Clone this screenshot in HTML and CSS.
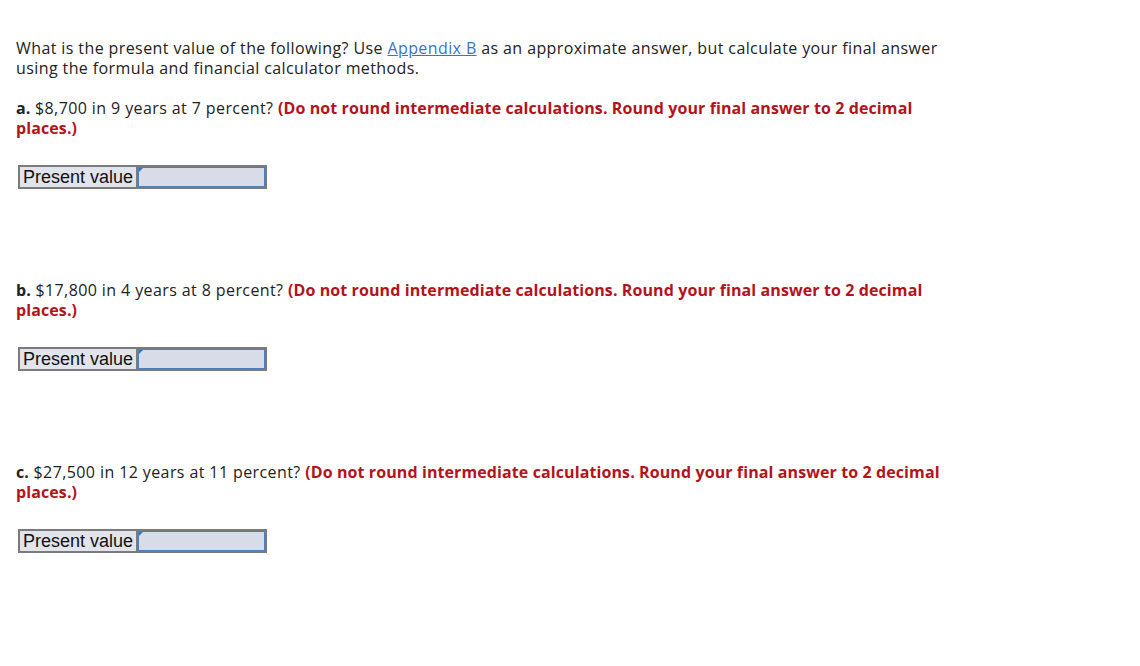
FILE: index.html
```html
<!DOCTYPE html>
<html>
<head>
<meta charset="utf-8">
<link rel="stylesheet" href="styles.css">
</head>
<body>
<div class="page">
  <p class="intro">What is the present value of the following? Use <a href="#" class="link">Appendix B</a> as an approximate answer, but calculate your final answer using the formula and financial calculator methods.</p>

  <div class="part">
    <p class="q"><b>a.</b> $8,700 in 9 years at 7 percent? <span class="note">(Do not round intermediate calculations. Round your final answer to 2 decimal places.)</span></p>
    <div class="answer">
      <div class="label">Present value</div>
      <div class="input"><span class="flag"></span></div>
    </div>
  </div>

  <div class="part">
    <p class="q"><b>b.</b> $17,800 in 4 years at 8 percent? <span class="note">(Do not round intermediate calculations. Round your final answer to 2 decimal places.)</span></p>
    <div class="answer">
      <div class="label">Present value</div>
      <div class="input"><span class="flag"></span></div>
    </div>
  </div>

  <div class="part">
    <p class="q"><b>c.</b> $27,500 in 12 years at 11 percent? <span class="note">(Do not round intermediate calculations. Round your final answer to 2 decimal places.)</span></p>
    <div class="answer">
      <div class="label">Present value</div>
      <div class="input"><span class="flag"></span></div>
    </div>
  </div>
</div>
</body>
</html>
```

FILE: styles.css
```css
html, body {
  margin: 0;
  padding: 0;
  background: #ffffff;
}
.page {
  padding: 38px 0 0 16px;
  width: 945px;
  font-family: "Open Sans", Lato, sans-serif;
  font-size: 16px;
  letter-spacing: 0.4px;
  line-height: 20px;
  color: #222222;
}
p {
  margin: 0;
}
.intro {
  margin-bottom: 20px;
}
.link {
  color: #3a74c4;
  text-decoration: underline;
}
.part {
  margin-bottom: 91px;
}
.q b {
  font-weight: 700;
  letter-spacing: 0.1px;
}
.note {
  color: #b3131b;
  font-weight: 700;
  letter-spacing: 0.1px;
}
.answer {
  margin-top: 27px;
  margin-left: 2px;
  display: inline-flex;
  gap: 2px;
  padding: 2px;
  background: #7b7b7b;
  height: 20px;
  letter-spacing: 0;
}
.label {
  background: #e1e4ea;
  font-family: "Liberation Sans", Arial, sans-serif;
  font-size: 18px;
  line-height: 20px;
  padding: 0 2px 0 3px;
  color: #111111;
  width: 111px;
}
.input {
  position: relative;
  width: 127px;
  background: #d8dce8;
  border: 1px solid #4a7fc0;
  box-sizing: border-box;
}
.flag {
  position: absolute;
  left: 0;
  top: 0;
  width: 0;
  height: 0;
  border-top: 4px solid #3a74c4;
  border-right: 4px solid transparent;
  border-bottom: 4px solid transparent;
}
```
